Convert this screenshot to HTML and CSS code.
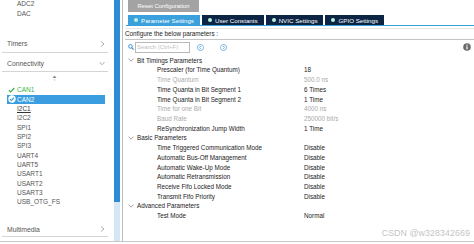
FILE: index.html
```html
<!DOCTYPE html>
<html>
<head>
<meta charset="utf-8">
<link rel="stylesheet" href="styles.css">
</head>
<body>
<div class="app">
  <aside class="sidebar">
    <div class="items top-items">
      <div class="item"><span class="ico"></span>ADC2</div>
      <div class="item"><span class="ico"></span>DAC</div>
    </div>
    <div class="cat cat-timers"><span>Timers</span>
      <svg class="chev" width="5" height="6" viewBox="0 0 5 6"><path d="M1 0.5 L4 3 L1 5.5" fill="none" stroke="#999" stroke-width="0.8"/></svg>
    </div>
    <div class="cat cat-conn"><span>Connectivity</span>
      <svg class="chev" width="6" height="5" viewBox="0 0 6 5"><path d="M0.5 1 L3 3.8 L5.5 1" fill="none" stroke="#999" stroke-width="0.8"/></svg>
    </div>
    <div class="sort">
      <svg width="5" height="7" viewBox="0 0 5 7"><path d="M2.5 0.5 L4.5 3 L0.5 3 Z" fill="#888"/><path d="M1.5 4.5 L3.5 4.5 L2.5 6 Z" fill="#bbb"/></svg>
    </div>
    <div class="items">
      <div class="item ok"><span class="ico"><svg width="7" height="6" viewBox="0 0 7 6"><path d="M0.8 3.2 L2.7 5 L6.3 1" fill="none" stroke="#3bb34a" stroke-width="1.2"/></svg></span>CAN1</div>
      <div class="item sel"><span class="ico"><svg width="8" height="8" viewBox="0 0 8 8"><circle cx="4" cy="4" r="3.7" fill="#fff"/><path d="M2 4.1 L3.5 5.5 L6 2.7" fill="none" stroke="#3a9de0" stroke-width="1.2"/></svg></span>CAN2</div>
      <div class="item und"><span class="ico"></span><u>I2C1</u></div>
      <div class="item"><span class="ico"></span>I2C2</div>
      <div class="item"><span class="ico"></span>SPI1</div>
      <div class="item"><span class="ico"></span>SPI2</div>
      <div class="item"><span class="ico"></span>SPI3</div>
      <div class="item"><span class="ico"></span>UART4</div>
      <div class="item"><span class="ico"></span>UART5</div>
      <div class="item"><span class="ico"></span>USART1</div>
      <div class="item"><span class="ico"></span>USART2</div>
      <div class="item"><span class="ico"></span>USART3</div>
      <div class="item"><span class="ico"></span>USB_OTG_FS</div>
    </div>
    <div class="cat cat-multi"><span>Multimedia</span>
      <svg class="chev" width="5" height="6" viewBox="0 0 5 6"><path d="M1 0.5 L4 3 L1 5.5" fill="none" stroke="#999" stroke-width="0.8"/></svg>
    </div>
  </aside>
  <div class="scrollbar"><div class="thumb"></div></div>
  <main class="main">
    <div class="toolbar"><button class="reset">Reset Configuration</button></div>
    <div class="tabs">
      <div class="tab active"><span class="dot"></span>Parameter Settings</div>
      <div class="tab"><span class="dot"></span>User Constants</div>
      <div class="tab"><span class="dot"></span>NVIC Settings</div>
      <div class="tab"><span class="dot"></span>GPIO Settings</div>
    </div>
    <div class="configure">Configure the below parameters :</div>
    <div class="searchrow">
      <svg class="mag" width="6" height="6" viewBox="0 0 6 6"><circle cx="2.4" cy="2.4" r="1.8" fill="none" stroke="#2f86d0" stroke-width="0.9"/><path d="M3.7 3.7 L5.6 5.6" stroke="#2f86d0" stroke-width="1.1"/></svg>
      <div class="search">Search (Ctrl+F)</div>
      <svg class="nav" width="7" height="7" viewBox="0 0 7 7"><circle cx="3.5" cy="3.5" r="3" fill="none" stroke="#5aa6e0" stroke-width="0.8"/><path d="M3.9 2 L2.4 3.5 L3.9 5" fill="none" stroke="#5aa6e0" stroke-width="0.8"/></svg>
      <svg class="nav nav2" width="7" height="7" viewBox="0 0 7 7"><circle cx="3.5" cy="3.5" r="3" fill="none" stroke="#5aa6e0" stroke-width="0.8"/><path d="M3.1 2 L4.6 3.5 L3.1 5" fill="none" stroke="#5aa6e0" stroke-width="0.8"/></svg>
      <svg class="info" width="8" height="8" viewBox="0 0 8 8"><circle cx="4" cy="4" r="3.8" fill="#6b6b6b"/><rect x="3.4" y="3.3" width="1.2" height="3" fill="#fff"/><rect x="3.4" y="1.6" width="1.2" height="1.1" fill="#fff"/></svg>
    </div>
    <div class="tree">
      <div class="grp"><svg width="6" height="4" viewBox="0 0 6 4"><path d="M0.5 0.6 L3 3.2 L5.5 0.6" fill="none" stroke="#888" stroke-width="0.8"/></svg>Bit Timings Parameters</div>
      <div class="row"><span class="lbl">Prescaler (for Time Quantum)</span><span class="val">18</span></div>
      <div class="row dim"><span class="lbl">Time Quantum</span><span class="val">500.0 ns</span></div>
      <div class="row"><span class="lbl">Time Quanta in Bit Segment 1</span><span class="val">6 Times</span></div>
      <div class="row"><span class="lbl">Time Quanta in Bit Segment 2</span><span class="val">1 Time</span></div>
      <div class="row dim"><span class="lbl">Time for one Bit</span><span class="val">4000 ns</span></div>
      <div class="row dim"><span class="lbl">Baud Rate</span><span class="val">250000 bit/s</span></div>
      <div class="row"><span class="lbl">ReSynchronization Jump Width</span><span class="val">1 Time</span></div>
      <div class="grp"><svg width="6" height="4" viewBox="0 0 6 4"><path d="M0.5 0.6 L3 3.2 L5.5 0.6" fill="none" stroke="#888" stroke-width="0.8"/></svg>Basic Parameters</div>
      <div class="row"><span class="lbl">Time Triggered Communication Mode</span><span class="val">Disable</span></div>
      <div class="row"><span class="lbl">Automatic Bus-Off Management</span><span class="val">Disable</span></div>
      <div class="row"><span class="lbl">Automatic Wake-Up Mode</span><span class="val">Disable</span></div>
      <div class="row"><span class="lbl">Automatic Retransmission</span><span class="val">Disable</span></div>
      <div class="row"><span class="lbl">Receive Fifo Locked Mode</span><span class="val">Disable</span></div>
      <div class="row"><span class="lbl">Transmit Fifo Priority</span><span class="val">Disable</span></div>
      <div class="grp"><svg width="6" height="4" viewBox="0 0 6 4"><path d="M0.5 0.6 L3 3.2 L5.5 0.6" fill="none" stroke="#888" stroke-width="0.8"/></svg>Advanced Parameters</div>
      <div class="row"><span class="lbl">Test Mode</span><span class="val">Normal</span></div>
    </div>
  </main>
</div>
<div class="watermark">CSDN @w328342669</div>
</body>
</html>
```
FILE: styles.css
```css
html, body {
  margin: 0;
  padding: 0;
}
body {
  width: 474px;
  height: 244px;
  overflow: hidden;
  background: #fff;
  font-family: "Liberation Sans", Arial, sans-serif;
  color: #333;
  position: relative;
}
.app {
  display: flex;
  height: 241px;
  border-bottom: 1px solid #c8c8c8;
  overflow: hidden;
}
.sidebar {
  width: 114px;
  flex: none;
  overflow: hidden;
}
.items {
  margin-left: 7px;
  width: 98px;
}
.top-items {
  margin-top: -1px;
}
.item {
  display: flex;
  align-items: center;
  height: 9.35px;
  font-size: 6.5px;
  color: #555;
  padding-left: 1px;
}
.top-items .item {
  height: 9.6px;
}
.ico {
  width: 8px;
  margin-right: 1px;
  display: flex;
  align-items: center;
}
.item.ok { color: #3bb34a; }
.item.sel {
  background: #3a9de0;
  color: #fff;
}
.item.und u { color: #333; }
.cat {
  display: flex;
  align-items: center;
  justify-content: space-between;
  margin: 0 6px 0 2px;
  padding: 0 3px 0 5px;
  border-bottom: 1px solid #d4d4d4;
  font-size: 6.8px;
  color: #555;
}
.cat-timers { margin-top: 18px; height: 15.5px; }
.cat-conn { margin-top: 3px; height: 15px; }
.cat-multi { margin-top: 15px; height: 14.8px; }
.sort {
  height: 13.5px;
  display: flex;
  align-items: center;
  justify-content: center;
  padding-right: 6px;
}
.scrollbar {
  width: 6px;
  flex: none;
  background: #d3e7f6;
}
.thumb {
  height: 202px;
  background: #2e8bd6;
}
.main {
  flex: 1;
  margin-left: 2px;
  border-left: 1px solid #bdbdbd;
  padding-left: 3px;
  font-size: 6.3px;
  color: #222;
}
.toolbar {
  height: 15px;
  padding-left: 2px;
}
.reset {
  display: block;
  width: 71px;
  height: 12px;
  margin: 0;
  padding: 0;
  border: none;
  background: #a3a3a3;
  color: #fff;
  font-family: inherit;
  font-size: 5.9px;
}
.tabs {
  display: flex;
  gap: 2px;
  height: 10px;
  padding-left: 2px;
  border-bottom: 1px solid #3aa0dc;
}
.tab {
  display: flex;
  align-items: center;
  padding: 0 6px 0 6px;
  background: #0c2545;
  color: #fff;
  font-size: 6.2px;
}
.tab.active { background: #3ba0dc; }
.dot {
  width: 4px;
  height: 4px;
  border-radius: 50%;
  background: #b9f0e0;
  margin-right: 3px;
}
.configure {
  margin-top: 2px;
  height: 10px;
  line-height: 10px;
  border-top: 1px solid #e6e6e6;
  border-bottom: 1px solid #c4c4c4;
  margin-left: -1px;
}
.searchrow {
  display: flex;
  align-items: center;
  height: 14px;
  padding-left: 2px;
}
.mag { margin-right: 1px; }
.search {
  width: 52px;
  height: 9px;
  border: 1px solid #b8b8b8;
  color: #c0c0c0;
  font-size: 6px;
  line-height: 9px;
  padding-left: 1px;
}
.nav { margin-left: 7px; }
.nav2 { margin-left: 16px; }
.info { margin-left: auto; margin-right: 3px; }
.tree { padding-top: 1.3px; }
.grp {
  display: flex;
  align-items: center;
  height: 9.73px;
  padding-left: 2px;
  gap: 3px;
}
.row {
  display: grid;
  grid-template-columns: 178px 1fr;
  height: 9.73px;
  align-items: center;
}
.lbl { padding-left: 31px; }
.row.dim { color: #aaa; }
.watermark {
  position: absolute;
  right: 4px;
  bottom: 6px;
  font-size: 8.8px;
  color: #c4c4c4;
  letter-spacing: 0.1px;
}
```
